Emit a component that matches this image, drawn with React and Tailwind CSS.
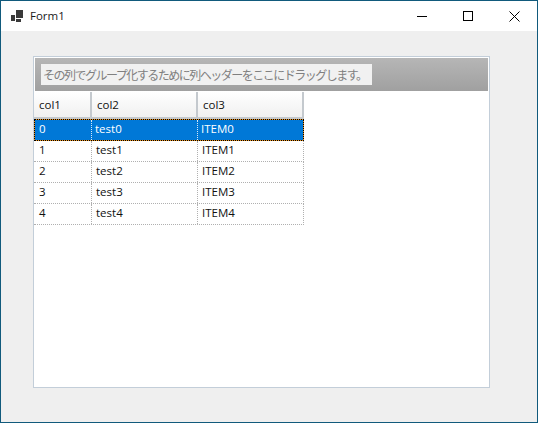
import React from 'react';

const ROWS = [
  ['0', 'test0', 'ITEM0'],
  ['1', 'test1', 'ITEM1'],
  ['2', 'test2', 'ITEM2'],
  ['3', 'test3', 'ITEM3'],
  ['4', 'test4', 'ITEM4'],
];

const COLS = [
  { name: 'col1', width: 'w-[58px]' },
  { name: 'col2', width: 'w-[106px]' },
  { name: 'col3', width: 'w-[106px]' },
];

function FormIcon() {
  return (
    <svg width="12" height="12" viewBox="0 0 12 12" className="shrink-0">
      <rect x="0" y="5" width="4" height="6" fill="#3a3a3a" />
      <rect x="5" y="0" width="7" height="8" fill="#3a3a3a" />
      <rect x="5" y="9" width="5" height="3" fill="#3a3a3a" />
    </svg>
  );
}

function TitleBar() {
  return (
    <div className="h-[30px] bg-white flex items-center justify-between">
      <div className="flex items-center pl-[10px] gap-[7px]">
        <FormIcon />
        <span className="text-[11.5px] text-[#1a1a1a]">Form1</span>
      </div>
      <div className="flex items-center">
        <button className="w-[46px] h-[30px] flex items-center justify-center">
          <span className="block w-[10px] h-px bg-black" />
        </button>
        <button className="w-[46px] h-[30px] flex items-center justify-center">
          <span className="block w-[10px] h-[10px] border border-black" />
        </button>
        <button className="w-[46px] h-[30px] flex items-center justify-center">
          <svg width="11" height="11" viewBox="0 0 11 11">
            <path d="M0.5 0.5 L10.5 10.5 M10.5 0.5 L0.5 10.5" stroke="#000" strokeWidth="1" fill="none" />
          </svg>
        </button>
      </div>
    </div>
  );
}

export default function App() {
  return (
    <div className="w-[538px] h-[423px] border border-[#115a7c] bg-[#efefef] flex flex-col overflow-hidden font-['Open_Sans','Noto_Sans_CJK_JP',sans-serif]">
      <TitleBar />

      {/* Form body */}
      <div className="flex-1 pl-[32px] pt-[25px]">
        <div className="w-[457px] h-[332px] border border-[#c3ced9] bg-white flex flex-col">
          {/* Group panel */}
          <div className="mx-px mt-px h-[33px] shrink-0 bg-gradient-to-b from-[#b6b6b6] to-[#a0a0a0] pl-[6px] pt-[6px]">
            <div className="w-[331px] h-[21px] bg-[#f1f1f1] flex items-center pl-[2px] text-[12px] tracking-[-1.5px] text-[#808080] font-['Noto_Sans_CJK_JP',sans-serif] whitespace-nowrap">
              その列でグループ化するために列ヘッダーをここにドラッグします。
            </div>
          </div>

          {/* Header */}
          <div className="flex h-[27px] mt-px shrink-0">
            {COLS.map((col) => (
              <div
                key={col.name}
                className={`${col.width} pl-[5px] flex items-center text-[11.5px] text-[#111] bg-gradient-to-b from-white to-[#f0f0f0] border-r-2 border-b-2 border-[#c4c9ce]`}
              >
                {col.name}
              </div>
            ))}
          </div>

          {/* Rows */}
          <div className="w-[270px]">
            {ROWS.map((row, i) =>
              i === 0 ? (
                <div key={row[0]} className="bg-[#e8921e]">
                  <div className="flex h-[22px] border border-dotted border-black">
                    {row.map((cell, j) => (
                      <div
                        key={j}
                        className={`${j === 0 ? 'w-[57px] pl-[4px]' : j === 1 ? 'w-[106px] pl-[3px]' : 'flex-1 pl-[3px]'} ${j < 2 ? 'border-r border-dotted border-[#d8e8f6]' : ''} bg-[#0078d7] text-white pb-[2px] flex items-center text-[11.5px] leading-none`}
                      >
                        {cell}
                      </div>
                    ))}
                  </div>
                </div>
              ) : (
                <div key={row[0]} className="flex h-[21px] text-[#111] border-b border-r border-dotted border-[#b0b0b0]">
                  {row.map((cell, j) => (
                    <div
                      key={j}
                      className={`${j === 0 ? 'w-[58px] pl-[5px]' : j === 1 ? 'w-[106px] pl-[4px]' : 'flex-1 pl-[4px]'} ${j < 2 ? 'border-r border-dotted border-[#b0b0b0]' : ''} pb-[2px] flex items-center text-[11.5px] leading-none`}
                    >
                      {cell}
                    </div>
                  ))}
                </div>
              )
            )}
          </div>
        </div>
      </div>
    </div>
  );
}
